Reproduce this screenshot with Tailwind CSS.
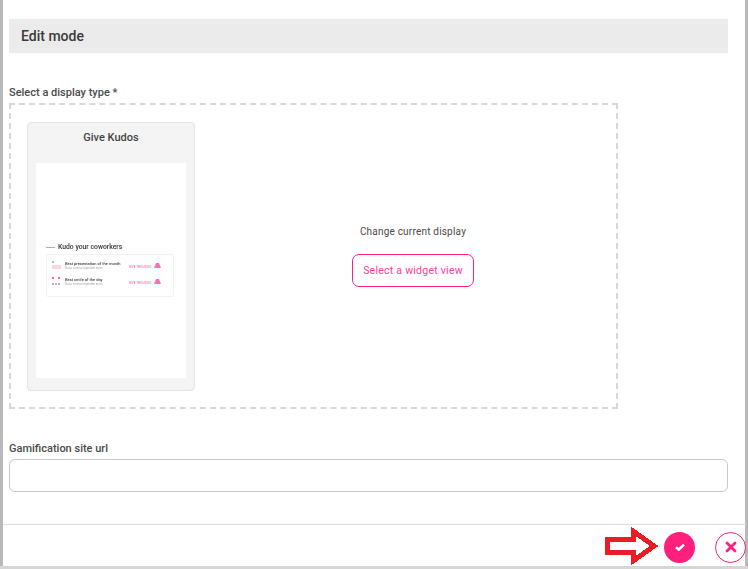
<!DOCTYPE html>
<html lang="en">
<head>
    <meta charset="UTF-8">
    <title>Edit mode</title>
    <script src="https://cdn.jsdelivr.net/npm/@tailwindcss/browser@4"></script>
</head>
<body class="w-[748px] h-[569px] overflow-hidden bg-[#b9b9b9] font-['Roboto',sans-serif] text-[#444]">
    <div class="relative ml-[3px] mr-[3px] h-[566px] bg-white flex flex-col">
        <!-- Form -->
        <div class="flex-1 pl-[6px] pr-[17px] pt-[19px]">
            <div class="h-[34px] bg-[#ebebeb] flex items-center px-3">
                <h2 class="text-[14px] font-medium text-[#3a3a3a]">Edit mode</h2>
            </div>

            <label class="block mt-[33px] text-[11px] font-medium leading-[14px] text-[#4a4a4a]">Select a display type *</label>

            <div class="mt-[3px] w-[609px] h-[306px] border-2 border-dashed border-[#d8d8d8] flex">
                <!-- Widget preview card -->
                <div class="ml-[16px] mt-[17px] w-[168px] h-[269px] bg-[#f4f4f4] border border-[#e4e4e4] rounded-[4px] flex flex-col items-center">
                    <div class="text-[11px] font-medium leading-[14px] mt-[8px]">Give Kudos</div>
                    <div class="mt-[18px] w-[150px] h-[215px] bg-white pl-[10px] pr-[12px] pt-[80px] blur-[0.35px]">
                        <div class="flex items-center gap-[3px]">
                            <span class="w-[9px] h-px bg-[#ff80c0]"></span>
                            <span class="text-[6.8px] leading-[9px] font-semibold whitespace-nowrap">Kudo your coworkers</span>
                        </div>
                        <div class="mt-[2px] border border-[#f2f2f2] rounded-[2px] h-[43px] px-[4px] pt-[5px] flex flex-col gap-[5px]">
                            <div class="flex items-center">
                                <svg width="11" height="11" viewBox="0 0 11 11" class="shrink-0">
                                    <circle cx="2" cy="2" r="1" fill="#c090a8"/><rect x="1" y="5" width="9" height="4" fill="#fbd5e6"/>
                                </svg>
                                <div class="ml-[3px] w-[63px]">
                                    <div class="text-[4px] leading-[5px] font-medium whitespace-nowrap">Best presentation of the month</div>
                                    <div class="text-[3px] leading-[4px] text-[#aaa] whitespace-nowrap">Nunc viverra imperdiet enim</div>
                                </div>
                                <span class="text-[3px] text-[#ff4fa0] ml-[1px] mt-[3px] whitespace-nowrap">GIVE THIS KUDO</span>
                                <svg width="7" height="5" viewBox="0 0 7 5" class="ml-[3px]"><path d="M0 5 L2 0 H5 L7 5 Z" fill="#ff6fb0"/></svg>
                            </div>
                            <div class="flex items-center">
                                <svg width="11" height="11" viewBox="0 0 11 11" class="shrink-0">
                                    <circle cx="2" cy="2" r="1" fill="#ff2d8a"/><circle cx="8" cy="2" r="1" fill="#ff2d8a"/><circle cx="2" cy="8" r=".8" fill="#555"/><circle cx="5" cy="8" r=".8" fill="#555"/><circle cx="8" cy="8" r=".8" fill="#555"/>
                                </svg>
                                <div class="ml-[3px] w-[63px]">
                                    <div class="text-[4px] leading-[5px] font-medium whitespace-nowrap">Best smile of the day</div>
                                    <div class="text-[3px] leading-[4px] text-[#aaa] whitespace-nowrap">Nunc viverra imperdiet enim</div>
                                </div>
                                <span class="text-[3px] text-[#ff4fa0] ml-[1px] mt-[3px] whitespace-nowrap">GIVE THIS KUDO</span>
                                <svg width="7" height="5" viewBox="0 0 7 5" class="ml-[3px]"><path d="M0 5 L2 0 H5 L7 5 Z" fill="#ff6fb0"/></svg>
                            </div>
                        </div>
                    </div>
                </div>

                <!-- Change display -->
                <div class="ml-[157px] mt-[120px] flex flex-col items-center">
                    <p class="text-[10px] leading-[14px] text-[#4a4a4a] tracking-[0.2px]">Change current display</p>
                    <button class="mt-[15px] w-[122px] h-[33px] border border-[#f0247f] rounded-[7px] text-[10.5px] text-[#ff3d94] tracking-[0.25px]">Select a widget view</button>
                </div>
            </div>

            <label class="block mt-[33px] text-[11px] font-medium leading-[14px] text-[#4a4a4a]">Gamification site url</label>
            <input type="text" class="block mt-[3px] w-full h-[33px] border border-[#c8c8c8] rounded-[6px] outline-none">
        </div>

        <!-- Footer actions -->
        <div class="h-[42px] -mr-px border-t border-[#dcdcdc] flex items-center justify-end pt-[3px] gap-[20px]">
            <button class="w-[31px] h-[31px] rounded-full bg-[#ff1f7d] flex items-center justify-center">
                <svg width="12" height="10" viewBox="0 0 12 10"><path d="M2 5.2 L4.8 7.6 L10 2.6" fill="none" stroke="white" stroke-width="2.6"/></svg>
            </button>
            <button class="w-[31px] h-[31px] rounded-full border border-[#ff1f7d] flex items-center justify-center">
                <svg width="12" height="12" viewBox="0 0 12 12"><path d="M2 2 L10 10 M10 2 L2 10" fill="none" stroke="#ff1f7d" stroke-width="2.8" stroke-linecap="round"/></svg>
            </button>
        </div>

        <!-- Red annotation arrow -->
        <svg class="absolute left-[599px] top-[524px]" width="60" height="44" viewBox="0 0 60 44" shape-rendering="crispEdges">
            <path d="M5 15.5 H31 V7 L52 22 L31 37 V28.5 H5 Z" fill="white" stroke="#ed1c24" stroke-width="5"/>
        </svg>
    </div>
    <div class="h-[3px] bg-[#d6d6d6]"></div>
</body>
</html>
